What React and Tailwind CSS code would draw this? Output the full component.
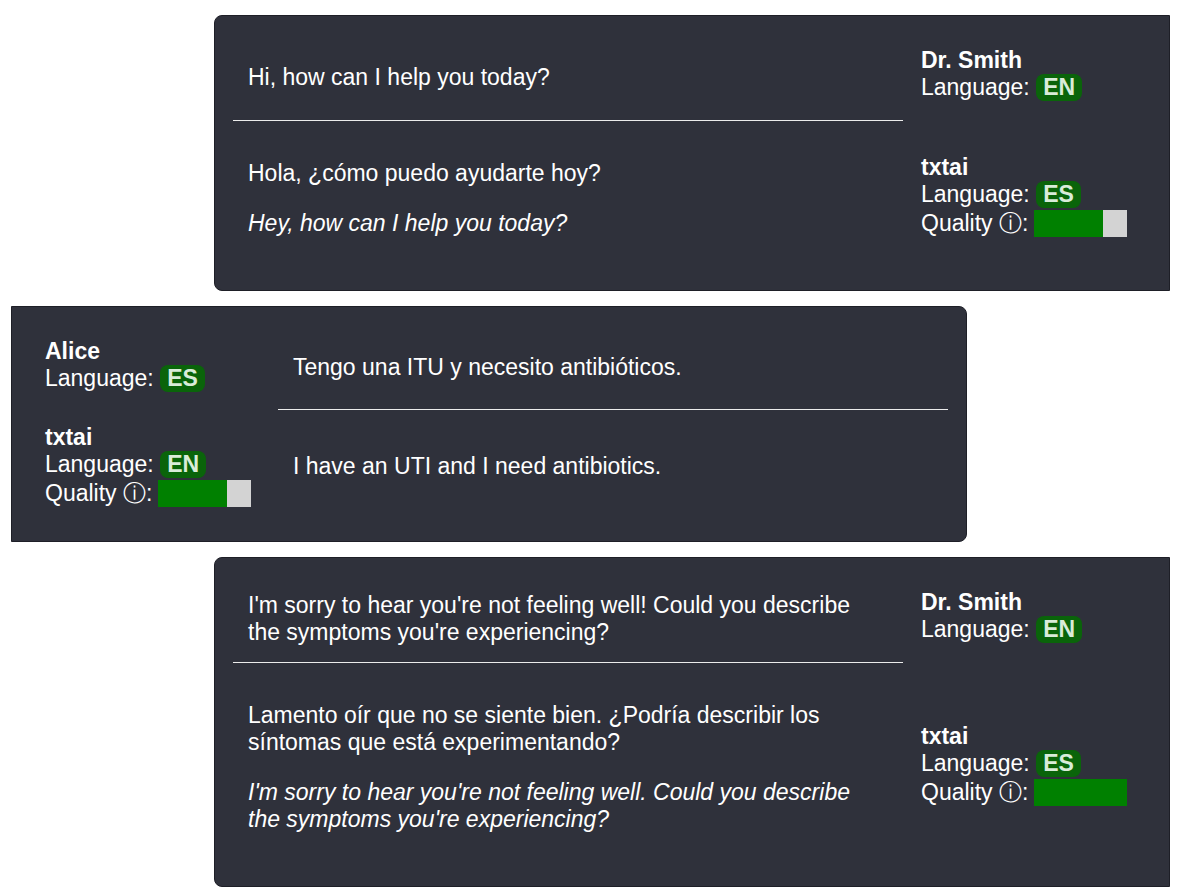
import React from "react";

const messages = [
  {
    side: "right",
    text: "Hi, how can I help you today?",
    speaker: "Dr. Smith",
    lang: "EN",
    translated: "Hola, ¿cómo puedo ayudarte hoy?",
    back: "Hey, how can I help you today?",
    tlang: "ES",
    quality: 0.74,
  },
  {
    side: "left",
    text: "Tengo una ITU y necesito antibióticos.",
    speaker: "Alice",
    lang: "ES",
    translated: "I have an UTI and I need antibiotics.",
    back: null,
    tlang: "EN",
    quality: 0.74,
  },
  {
    side: "right",
    text: "I'm sorry to hear you're not feeling well! Could you describe the symptoms you're experiencing?",
    speaker: "Dr. Smith",
    lang: "EN",
    translated: "Lamento oír que no se siente bien. ¿Podría describir los síntomas que está experimentando?",
    back: "I'm sorry to hear you're not feeling well. Could you describe the symptoms you're experiencing?",
    tlang: "ES",
    quality: 1,
  },
];

const Badge = ({ children }) => (
  <span className="inline-block px-[7px] rounded-[8px] bg-[#0a640a] text-[#d9ecd9] font-bold leading-[27px]">
    {children}
  </span>
);

// pad differs a bit between the speaker row and the txtai row
const Meta = ({ name, lang, quality, left, pad }) => (
  <div className={`w-[248px] shrink-0 ${left ? "pl-[15px]" : "pl-[18px]"} ${pad}`}>
    <div className="font-bold">{name}</div>
    <div>
      Language: <Badge>{lang}</Badge>
    </div>
    {quality !== undefined && (
      <div className="flex items-center gap-[6px] h-[31px]">
        <span>Quality ⓘ:</span>
        <div className="w-[93px] h-[27px] bg-[#d3d3d3] flex">
          <div className="h-full bg-[#008000]" style={{ width: `${quality * 100}%` }} />
        </div>
      </div>
    )}
  </div>
);

const Card = ({ m }) => {
  const left = m.side === "left";
  const rowCls = `flex items-center ${left ? "flex-row-reverse" : ""}`;
  return (
    <div
      className={`w-[956px] bg-[#2f313b] border border-[#1e1f27] p-[18px] ${
        left ? "ml-[11px] rounded-r-[8px]" : "ml-[214px] rounded-l-[8px]"
      }`}
    >
      <div className={rowCls}>
        <div className="flex-1 self-stretch flex items-center border-b border-[#ececec] pl-[15px] pr-[30px]">
          <p>{m.text}</p>
        </div>
        <Meta
          name={m.speaker}
          lang={m.lang}
          left={left}
          pad={left ? "pt-[13px] pb-[18px]" : "pt-[13px] pb-[20px]"}
        />
      </div>
      <div className={rowCls}>
        <div className={`flex-1 flex flex-col gap-[23px] pl-[15px] pr-[30px] ${m.back ? "pt-[39px] pb-[35px]" : "py-[14px]"}`}>
          <p>{m.translated}</p>
          {m.back && <p className="italic">{m.back}</p>}
        </div>
        <Meta name="txtai" lang={m.tlang} quality={m.quality} left={left} pad="py-[14px]" />
      </div>
    </div>
  );
};

export default function App() {
  return (
    <div
      className="w-[1200px] min-h-[895px] bg-white pt-[15px] flex flex-col gap-[15px] text-[23px] leading-[27px] text-white"
      style={{ fontFamily: '"Liberation Sans", Arial, sans-serif' }}
    >
      {messages.map((m, i) => (
        <Card key={i} m={m} />
      ))}
    </div>
  );
}
